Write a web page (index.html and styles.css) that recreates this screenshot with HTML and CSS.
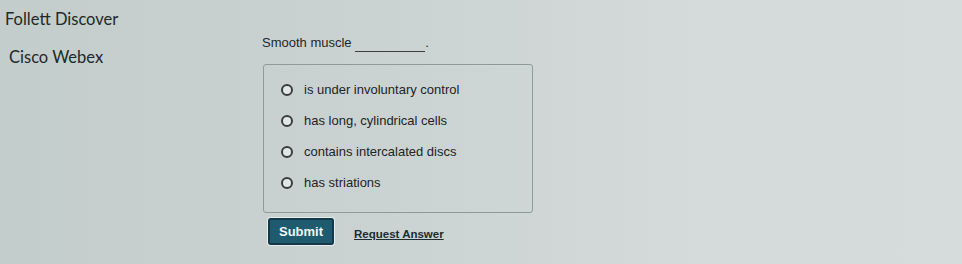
FILE: index.html
```html
<!DOCTYPE html>
<html lang="en">
<head>
<meta charset="utf-8">
<title>Smooth muscle</title>
<link rel="stylesheet" href="styles.css">
</head>
<body>
<div class="page">
  <nav class="side">
    <a class="side-link">Follett Discover</a>
    <a class="side-link second">Cisco Webex</a>
  </nav>
  <main class="main">
    <p class="question">Smooth muscle <span class="blank"></span>.</p>
    <div class="options">
      <label class="opt"><span class="radio"></span><span>is under involuntary control</span></label>
      <label class="opt"><span class="radio"></span><span>has long, cylindrical cells</span></label>
      <label class="opt"><span class="radio"></span><span>contains intercalated discs</span></label>
      <label class="opt"><span class="radio"></span><span>has striations</span></label>
    </div>
    <div class="actions">
      <button class="submit">Submit</button>
      <a class="request">Request Answer</a>
    </div>
  </main>
</div>
</body>
</html>
```

FILE: styles.css
```css
html, body {
  margin: 0;
  padding: 0;
}
body {
  width: 962px;
  height: 264px;
  overflow: hidden;
  background: linear-gradient(90deg, #c3cdcc 0%, #c9d2d1 35%, #d3dad9 70%, #d6dcdb 100%);
  font-family: "Liberation Sans", Arial, sans-serif;
  color: #2b3132;
}
.page {
  display: flex;
}
.side {
  width: 262px;
  display: flex;
  flex-direction: column;
  padding: 9px 0 0 5px;
  box-sizing: border-box;
}
.side-link {
  font-family: Lato, "Open Sans", sans-serif;
  font-size: 16.5px;
  line-height: 20px;
  color: #232829;
}
.side-link.second {
  margin-top: 18px;
  padding-left: 4px;
}
.main {
  display: flex;
  flex-direction: column;
  padding-top: 33px;
}
.question {
  margin: 0;
  font-size: 13px;
  line-height: 16px;
  color: #222728;
}
.blank {
  display: inline-block;
  width: 70px;
  height: 18px;
  border-bottom: 1px solid #3a4040;
  vertical-align: -5px;
  margin-left: 0;
}
.options {
  margin-top: 12px;
  margin-left: 1px;
  width: 270px;
  box-sizing: border-box;
  border: 1px solid #8f9a9a;
  border-radius: 3px;
  padding: 9px 0 14px 17px;
  display: flex;
  flex-direction: column;
}
.opt {
  height: 31px;
  display: flex;
  align-items: center;
  gap: 11px;
  font-size: 13px;
  color: #1e2324;
}
.radio {
  width: 12px;
  height: 12px;
  box-sizing: border-box;
  border: 2px solid #383d3e;
  border-radius: 50%;
  background: #e1e7e6;
}
.actions {
  margin-top: 5px;
  margin-left: 6px;
  display: flex;
  align-items: center;
  gap: 20px;
}
.submit {
  width: 66px;
  height: 27px;
  background: #1f5b6e;
  border: 2px solid #15394a;
  outline: 1px solid #e3efef;
  border-radius: 2px;
  color: #f2f6f6;
  font-family: "Liberation Sans", Arial, sans-serif;
  font-weight: bold;
  font-size: 13px;
  padding: 0;
}
.request {
  font-size: 11.5px;
  font-weight: bold;
  color: #1d2b33;
  text-decoration: underline;
  padding-top: 4px;
}
```
